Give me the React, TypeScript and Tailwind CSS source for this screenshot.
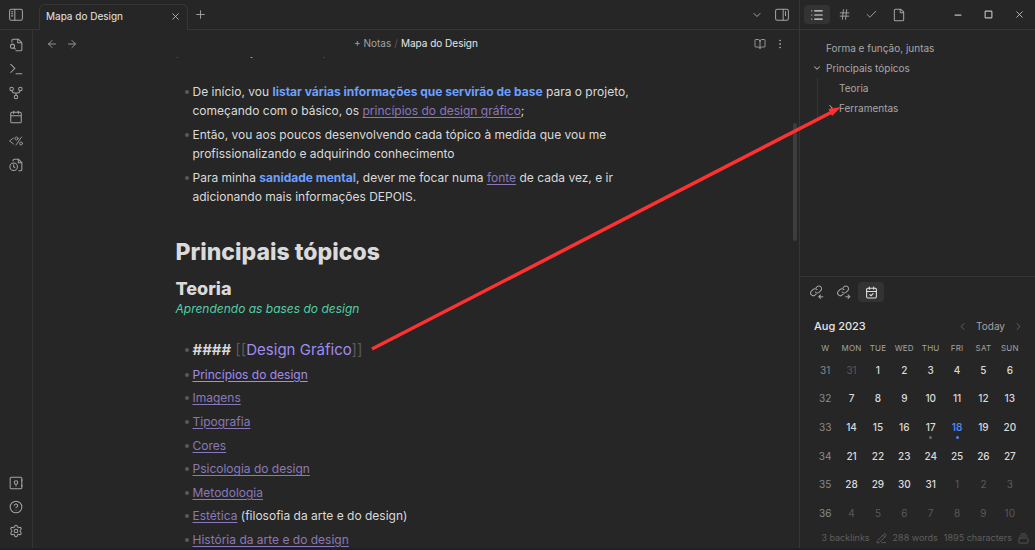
import React from "react";
import {
  ArrowLeft, ArrowRight, BookOpen, Calendar, CalendarCheck, Check, ChevronDown, ChevronLeft, ChevronRight,
  CircleHelp, EllipsisVertical, File, Hash, List, Minus, PencilLine, Plus, Settings, Square, X,
} from "lucide-react";

type IconProps = { children: React.ReactNode; className?: string };

function Svg({ children, className = "size-[14px]" }: IconProps) {
  return (
    <svg viewBox="0 0 24 24" fill="none" stroke="currentColor" strokeWidth={1.75} strokeLinecap="round" strokeLinejoin="round" className={className} aria-hidden="true">
      {children}
    </svg>
  );
}

const SidebarLeftIcon = () => (
  <Svg>
    <rect x="1" y="2" width="22" height="19" rx="3" />
    <path d="M10 2v19M4.5 6.500h2M4.5 10h2M4.5 13.500h2" />
  </Svg>
);

const SidebarRightIcon = () => (
  <Svg>
    <rect x="1" y="2" width="22" height="19" rx="3" />
    <path d="M14 2v19M18 6v7" />
  </Svg>
);

const FileSearchIcon = () => (
  <Svg>
    <path d="M5 7V4a2 2 0 0 1 2-2h9l6 6v12a2 2 0 0 1-2 2h-8" />
    <path d="M15 2v6h6" />
    <circle cx="6" cy="14" r="3.5" />
    <path d="M8.5 16.500l2.500 2.500" />
  </Svg>
);

const TerminalIcon = () => (
  <Svg>
    <path d="m3 18 7-7-7-7M12 20h10" />
  </Svg>
);

const GraphIcon = () => (
  <Svg>
    <circle cx="4.500" cy="5" r="3" />
    <circle cx="19.500" cy="5" r="3" />
    <circle cx="12" cy="19" r="3" />
    <path d="M5 8c.5 3 2 4 4 4h6c2 0 3.500-1 4-4M12 12v4" />
  </Svg>
);

const TemplateIcon = () => (
  <svg viewBox="0 0 28 24" fill="none" stroke="currentColor" strokeWidth={1.75} strokeLinecap="round" strokeLinejoin="round" className="h-[12px] w-[14px]" aria-hidden="true">
    <path d="M9 6l-8 6 8 6M25 4L14 20" />
    <circle cx="15" cy="7" r="3" />
    <circle cx="24" cy="17" r="3" />
  </svg>
);

const FileClockIcon = () => (
  <Svg>
    <path d="M7 5V4a2 2 0 0 1 2-2h7l6 6v12a2 2 0 0 1-2 2h-3" />
    <path d="M16 2v6h6" />
    <circle cx="8" cy="15" r="6.500" />
    <path d="M8 11.500V15l2 1.500" />
  </Svg>
);

const VaultIcon = () => (
  <Svg>
    <rect x="2" y="2" width="20" height="20" rx="2" />
    <circle cx="12" cy="11" r="3" />
    <path d="M12 14v3M22 6v3M22 15v3" />
  </Svg>
);

const LinkPaths = () => (
  <>
    <path d="M9 12a4.500 4.500 0 0 0 6.500.5l3-3a4.500 4.500 0 0 0-6.500-6.500l-1.500 1.500" />
    <path d="M12 8a4.500 4.500 0 0 0-6.500-.5l-3 3A4.500 4.500 0 0 0 9 17l1.500-1.500" />
  </>
);

const BacklinkIcon = () => (
  <Svg>
    <LinkPaths />
    <path d="M22 20h-7M18 17l-3 3 3 3" />
  </Svg>
);

const OutgoingLinkIcon = () => (
  <Svg>
    <LinkPaths />
    <path d="M15 20h7M19 17l3 3-3 3" />
  </Svg>
);

const StackIcon = () => (
  <Svg className="size-[11px]">
    <rect x="2" y="11" width="20" height="11" rx="2" />
    <path d="M4 6.500h16M7 2h10" />
  </Svg>
);

function IconButton({ label, children, className = "" }: { label: string; children: React.ReactNode; className?: string }) {
  return (
    <button type="button" aria-label={label} className={`flex items-center justify-center ${className}`}>
      {children}
    </button>
  );
}

function NoteLink({ children }: { children: React.ReactNode }) {
  return (
    <a href="#" className="text-[#8a78b8] underline underline-offset-2">
      {children}
    </a>
  );
}

function Item({ children }: { children: React.ReactNode }) {
  return (
    <li className="relative before:absolute before:-left-2 before:top-2 before:size-1 before:rounded-full before:bg-[#5a5a5a]">
      {children}
    </li>
  );
}

const weeks = [
  { week: 31, days: [31, 1, 2, 3, 4, 5, 6] },
  { week: 32, days: [7, 8, 9, 10, 11, 12, 13] },
  { week: 33, days: [14, 15, 16, 17, 18, 19, 20] },
  { week: 34, days: [21, 22, 23, 24, 25, 26, 27] },
  { week: 35, days: [28, 29, 30, 31, 1, 2, 3] },
  { week: 36, days: [4, 5, 6, 7, 8, 9, 10] },
];

function dayColor(week: number, day: number) {
  if ((week === 31 && day === 31) || (week === 35 && day < 10) || week === 36) return "text-[#5a5a5a]";
  if (week === 33 && day === 18) return "font-semibold text-[#4d83f5]";
  return "font-medium text-[#dadada]";
}

function Ribbon() {
  return (
    <nav aria-label="Ribbon" className="flex w-[33px] shrink-0 flex-col items-center border-r border-[#333333] pb-[5px] pt-[3px] text-[#a3a3a3]">
      <IconButton label="Quick switcher" className="size-6"><FileSearchIcon /></IconButton>
      <IconButton label="Command palette" className="size-6"><TerminalIcon /></IconButton>
      <IconButton label="Graph view" className="size-6"><GraphIcon /></IconButton>
      <IconButton label="Daily note" className="size-6"><Calendar size={14} strokeWidth={1.75} /></IconButton>
      <IconButton label="Templates" className="size-6"><TemplateIcon /></IconButton>
      <IconButton label="File history" className="size-6"><FileClockIcon /></IconButton>
      <div className="flex-1" />
      <IconButton label="Vault" className="size-6"><VaultIcon /></IconButton>
      <IconButton label="Help" className="size-6"><CircleHelp size={14} strokeWidth={1.75} /></IconButton>
      <IconButton label="Settings" className="size-6"><Settings size={14} strokeWidth={1.75} /></IconButton>
    </nav>
  );
}

function Note() {
  return (
    <main className="flex min-w-0 flex-1 flex-col">
      <header className="flex h-[27px] shrink-0 items-center justify-between px-[13px] text-[10px] text-[#a3a3a3]">
        <div className="flex flex-1 items-center gap-2">
          <IconButton label="Back"><ArrowLeft size={12} strokeWidth={1.75} /></IconButton>
          <IconButton label="Forward"><ArrowRight size={12} strokeWidth={1.75} /></IconButton>
        </div>
        <div className="flex gap-[3px]">
          <span>+ Notas</span>
          <span className="text-[#5a5a5a]">/</span>
          <span className="text-[#e6e6e6]">Mapa do Design</span>
        </div>
        <div className="flex flex-1 items-center justify-end gap-2">
          <IconButton label="Reading view"><BookOpen size={12} strokeWidth={1.75} /></IconButton>
          <IconButton label="More options"><EllipsisVertical size={12} strokeWidth={1.75} /></IconButton>
        </div>
      </header>
      <div className="flex min-h-0 flex-1 overflow-hidden">
        <article className="mx-auto w-[475px] text-[12px] leading-[19px] text-[#dadada]">
          <p className="-mt-4">para a formação e a mais prática</p>
          <ul className="mt-[22px] flex flex-col gap-[5px] pl-[17px]">
            <Item>
              De início, vou <strong className="font-bold text-[#6ea0ff]">listar várias informações que servirão de base</strong> para o projeto,
              <br />começando com o básico, os <NoteLink>princípios do design gráfico</NoteLink>;
            </Item>
            <Item>
              Então, vou aos poucos desenvolvendo cada tópico à medida que vou me
              <br />profissionalizando e adquirindo conhecimento
            </Item>
            <Item>
              Para minha <strong className="font-bold text-[#6ea0ff]">sanidade mental</strong>, dever me focar numa <NoteLink>fonte</NoteLink> de cada vez, e ir
              <br />adicionando mais informações DEPOIS.
            </Item>
          </ul>
          <h1 className="mt-8 text-[23px] font-extrabold leading-[28px]">Principais tópicos</h1>
          <h2 className="mt-3 text-[18px] font-extrabold leading-[21px]">Teoria</h2>
          <p className="italic text-[#4fd0a8]">Aprendendo as bases do design</p>
          <ul className="mt-[22px] grid h-[209px] content-between pl-[17px]">
            <Item>
              <span className="text-[15px]">
                <b className="font-semibold">####</b> <span className="text-[#5a5a5a]">[[</span>
                <a href="#" className="text-[#a08cf0]">Design Gráfico</a>
                <span className="text-[#5a5a5a]">]]</span>
              </span>
            </Item>
            <Item><a href="#" className="text-[#a08cf0] underline underline-offset-2">Princípios do design</a></Item>
            <Item><NoteLink>Imagens</NoteLink></Item>
            <Item><NoteLink>Tipografia</NoteLink></Item>
            <Item><NoteLink>Cores</NoteLink></Item>
            <Item><NoteLink>Psicologia do design</NoteLink></Item>
            <Item><NoteLink>Metodologia</NoteLink></Item>
            <Item><NoteLink>Estética</NoteLink> (filosofia da arte e do design)</Item>
            <Item><NoteLink>História da arte e do design</NoteLink></Item>
          </ul>
        </article>
        <div className="mr-[2px] mt-[66px] h-[118px] w-1 rounded-full bg-[#3d3d3d]" />
      </div>
    </main>
  );
}

function Outline() {
  return (
    <section aria-label="Outline" className="h-[247px] shrink-0 border-b border-[#363636] pt-2 text-[10px] leading-5 text-[#a8a8a8]">
      <div className="pl-[26px]">Forma e função, juntas</div>
      <div className="flex items-center gap-1 pl-3">
        <IconButton label="Collapse Principais tópicos"><ChevronDown size={10} strokeWidth={2.5} /></IconButton>
        Principais tópicos
      </div>
      <div className="ml-[17px] border-l border-[#363636]">
        <div className="pl-[21px]">Teoria</div>
        <div className="flex items-center pl-2">
          <IconButton label="Expand Ferramentas" className="mr-[3px]"><ChevronRight size={10} strokeWidth={2.5} /></IconButton>
          Ferramentas
        </div>
      </div>
    </section>
  );
}

function CalendarPane() {
  return (
    <section aria-label="Calendar" className="flex min-h-0 flex-1 flex-col">
      <div className="flex h-[30px] shrink-0 items-center gap-[1px] pl-1 text-[#a3a3a3]">
        <IconButton label="Backlinks" className="h-5 w-[26px]"><BacklinkIcon /></IconButton>
        <IconButton label="Outgoing links" className="h-5 w-[26px]"><OutgoingLinkIcon /></IconButton>
        <IconButton label="Calendar" className="h-5 w-[26px] rounded bg-[#333333] text-[#e0e0e0]"><CalendarCheck size={13} /></IconButton>
      </div>
      <div className="mt-2 flex h-[22px] shrink-0 items-center pl-[14px] pr-[11px] text-[10px] text-[#a3a3a3]">
        <h2 className="flex-1 text-[11px] font-medium text-[#e6e6e6]">Aug 2023</h2>
        <IconButton label="Previous month" className="text-[#6a6a6a]"><ChevronLeft size={11} /></IconButton>
        <button type="button" className="mx-2">Today</button>
        <IconButton label="Next month" className="text-[#6a6a6a]"><ChevronRight size={11} /></IconButton>
      </div>
      <div className="min-h-0 flex-1 px-3">
        <table className="h-full w-full table-fixed text-center text-[10px]">
          <thead>
            <tr className="h-[19px] text-[8px] tracking-wide text-[#a3a3a3]">
              {["W", "MON", "TUE", "WED", "THU", "FRI", "SAT", "SUN"].map((d) => (
                <th key={d} scope="col" className="pt-[2px] font-normal">{d}</th>
              ))}
            </tr>
          </thead>
          <tbody>
            {weeks.map(({ week, days }) => (
              <tr key={week}>
                <th scope="row" className="font-normal text-[#8a8a8a]">{week}</th>
                {days.map((day) => (
                  <td key={day} className={dayColor(week, day)}>
                    <span className="relative">
                      {day}
                      {week === 33 && day === 17 && <i className="absolute inset-x-0 top-[15px] mx-auto size-[3px] rounded-full bg-[#6a6a6a]" />}
                      {week === 33 && day === 18 && <i className="absolute inset-x-0 top-[15px] mx-auto size-[3px] rounded-full bg-[#4d83f5]" />}
                    </span>
                  </td>
                ))}
              </tr>
            ))}
          </tbody>
        </table>
      </div>
      <footer className="flex h-5 shrink-0 items-center justify-end gap-[6px] pr-[6px] text-[9px] text-[#5e5e5e]">
        <span>3 backlinks</span>
        <PencilLine size={11} />
        <span>288 words</span>
        <span>1895 characters</span>
        <StackIcon />
      </footer>
    </section>
  );
}

export default function App() {
  return (
    <div className="relative flex h-screen flex-col overflow-hidden border-b-2 border-[#1d2026] bg-[#262626] font-['Inter',sans-serif]">
      <div className="flex h-[30px] shrink-0 text-[#a3a3a3]">
        <IconButton label="Toggle left sidebar" className="w-[33px] border-b border-[#363636] pr-px"><SidebarLeftIcon /></IconButton>
        <div className="w-[6px] border-b border-[#363636]" />
        <div role="tab" aria-selected="true" className="mt-1 flex w-[149px] items-center justify-between rounded-t-md border-x border-t border-[#363636] pb-[2px] pl-[6px] pr-[6px] text-[10px] text-[#e6e6e6]">
          Mapa do Design
          <IconButton label="Close tab" className="text-[#b3b3b3]"><X size={11} /></IconButton>
        </div>
        <div className="flex flex-1 items-center justify-between border-b border-[#363636] pl-[6px] pr-[10px]">
          <IconButton label="New tab"><Plus size={13} strokeWidth={1.75} /></IconButton>
          <div className="flex gap-3">
            <IconButton label="Tab list"><ChevronDown size={12} /></IconButton>
            <IconButton label="Toggle right sidebar"><SidebarRightIcon /></IconButton>
          </div>
        </div>
        <div className="flex w-[236px] items-center border-b border-l border-[#363636] pl-1 pr-[10px]">
          <IconButton label="Outline" className="h-[19px] w-[26px] rounded bg-[#333333] text-[#e0e0e0]"><List size={14} /></IconButton>
          <IconButton label="Tags" className="w-7"><Hash size={13} strokeWidth={1.75} /></IconButton>
          <IconButton label="Tasks" className="w-[27px]"><Check size={13} strokeWidth={1.75} /></IconButton>
          <IconButton label="Files" className="w-7"><File size={14} strokeWidth={1.75} /></IconButton>
          <div className="flex flex-1 items-center justify-end gap-[21px] text-[#c0c0c0]">
            <IconButton label="Minimize"><Minus size={10} strokeWidth={3} /></IconButton>
            <IconButton label="Maximize"><Square size={9} strokeWidth={3} /></IconButton>
            <IconButton label="Close"><X size={11} /></IconButton>
          </div>
        </div>
      </div>
      <div className="flex min-h-0 flex-1">
        <Ribbon />
        <Note />
        <aside className="flex w-[236px] shrink-0 flex-col border-l border-[#363636]">
          <Outline />
          <CalendarPane />
        </aside>
      </div>
      <svg className="pointer-events-none absolute left-[370px] top-[104px] h-[250px] w-[480px]" viewBox="0 0 480 250" aria-hidden="true">
        <path d="M2 245L461 8.500" stroke="#ff3131" strokeWidth="3.500" />
        <path d="M471 3L462 12L458.500 5Z" fill="#ff3131" />
      </svg>
    </div>
  );
}
